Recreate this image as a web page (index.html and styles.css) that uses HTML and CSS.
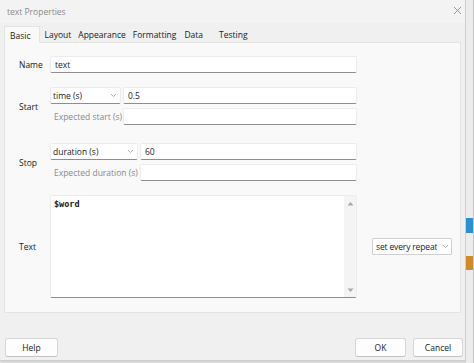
FILE: index.html
```html
<!DOCTYPE html>
<html>
<head>
<meta charset="utf-8">
<link rel="stylesheet" href="styles.css">
</head>
<body>
<div class="screen">
  <div class="dialog">
    <div class="titlebar">
      <span class="title">text Properties</span>
      <svg class="close" width="9" height="9" viewBox="0 0 9 9"><path d="M1 1L8 8M8 1L1 8" stroke="#8a8a8a" stroke-width="0.9" fill="none"/></svg>
    </div>
    <div class="tabs">
      <span class="tab active">Basic</span>
      <span class="tab t-layout">Layout</span>
      <span class="tab t-app">Appearance</span>
      <span class="tab t-fmt">Formatting</span>
      <span class="tab t-data">Data</span>
      <span class="tab t-test">Testing</span>
    </div>
    <div class="panel">
      <div class="row row-name">
        <span class="label">Name</span>
        <div class="field wide">text</div>
      </div>
      <div class="row row-start">
        <span class="label">Start</span>
        <div class="group">
          <div class="line">
            <div class="select sel-time">time (s)<svg class="chev" width="7" height="5" viewBox="0 0 7 5"><path d="M1 1L3.5 3.5L6 1" stroke="#999" stroke-width="0.8" fill="none"/></svg></div>
            <div class="field f-start">0.5</div>
          </div>
          <div class="line">
            <span class="sublabel sl-start">Expected start (s)</span>
            <div class="field f-start"></div>
          </div>
        </div>
      </div>
      <div class="row row-stop">
        <span class="label">Stop</span>
        <div class="group">
          <div class="line">
            <div class="select sel-dur">duration (s)<svg class="chev" width="7" height="5" viewBox="0 0 7 5"><path d="M1 1L3.5 3.5L6 1" stroke="#999" stroke-width="0.8" fill="none"/></svg></div>
            <div class="field f-stop">60</div>
          </div>
          <div class="line">
            <span class="sublabel sl-stop">Expected duration (s)</span>
            <div class="field f-stop"></div>
          </div>
        </div>
      </div>
      <div class="row row-text">
        <span class="label">Text</span>
        <div class="textarea">
          <div class="code">$word</div>
          <div class="scroll">
            <svg width="7" height="5" viewBox="0 0 7 5"><path d="M0.5 4.5L3.5 1L6.5 4.5Z" fill="#a8a8a8"/></svg>
            <svg width="7" height="5" viewBox="0 0 7 5"><path d="M0.5 0.5L3.5 4L6.5 0.5Z" fill="#a8a8a8"/></svg>
          </div>
        </div>
        <div class="select sel-repeat"><span>set every repeat</span><svg class="chev" width="7" height="5" viewBox="0 0 7 5"><path d="M1 1L3.5 3.5L6 1" stroke="#999" stroke-width="0.8" fill="none"/></svg></div>
      </div>
    </div>
    <div class="footer">
      <button class="btn btn-help">Help</button>
      <div class="right-btns">
        <button class="btn btn-ok">OK</button>
        <button class="btn btn-cancel">Cancel</button>
      </div>
    </div>
  </div>
  <div class="bgapp">
    <div class="bg-top"></div>
    <div class="bg-blue"></div>
    <div class="bg-gap"></div>
    <div class="bg-orange"></div>
  </div>
</div>
</body>
</html>
```
FILE: styles.css
```css
* { box-sizing: border-box; }
html, body { margin: 0; padding: 0; }
body {
  width: 474px; height: 363px; overflow: hidden;
  background: #e6e6e6;
  font-family: "Open Sans", "Noto Sans", sans-serif;
  font-size: 8.5px;
  color: #1a1a1a;
  white-space: nowrap;
}
.screen { display: flex; width: 474px; height: 363px; }
.dialog {
  width: 466px; height: 361px;
  background: #f0f0f0;
  border-right: 1px solid #cfcfcf;
  border-bottom: 1px solid #cfcfcf;
  display: flex; flex-direction: column;
  box-shadow: 1px 1px 2px rgba(0,0,0,0.12);
}
.titlebar {
  height: 23px; flex: none;
  display: flex; align-items: center; justify-content: space-between;
  padding: 0 3px 1px 7px;
  background: #f3f3f3;
  color: #8a8a8a;
}
.close { margin-top: -2px; }
.tabs { height: 19px; flex: none; display: flex; align-items: flex-end; padding-left: 4px; }
.tab {
  height: 16px; line-height: 16px;
  padding: 1px 5px 0;
  color: #1a1a1a;
}
.tab.active {
  background: #f9f9f9;
  border: 1px solid #e4e4e4; border-bottom: none;
  padding: 1px 9px 0 5px;
  height: 17px; line-height: 16px;
  position: relative; z-index: 1; margin-bottom: -1px;
}
.t-layout { padding-left: 4px; padding-right: 4px; }
.t-app { padding-left: 3px; padding-right: 4px; }
.t-fmt { padding-left: 3px; padding-right: 5px; }
.t-data { padding-left: 3px; padding-right: 13px; }
.t-test { padding-left: 3px; }
.panel {
  margin: 0 4px;
  height: 271px; flex: none;
  background: #f9f9f9;
  border: 1px solid #e4e4e4;
  padding: 13px 0 0 14px;
  display: flex; flex-direction: column;
}
.row { display: flex; align-items: center; }
.label { width: 31px; flex: none; }
.field {
  height: 17px; line-height: 16px;
  background: #fff;
  border: 1px solid #ececec; border-bottom-color: #8e8e8e;
  border-radius: 2px;
  padding-left: 4px;
}
.wide { width: 307px; }
.row-start { margin-top: 14px; }
.row-stop { margin-top: 18px; }
.row-text { margin-top: 14px; }
.group { display: flex; flex-direction: column; gap: 4px; }
.line { display: flex; align-items: center; gap: 2px; }
.select {
  height: 17px; line-height: 16px;
  background: #fff;
  border: 1px solid #ececec; border-bottom-color: #8e8e8e;
  border-radius: 2px;
  padding-left: 2px;
  display: flex; justify-content: space-between; align-items: center;
  padding-right: 3px;
}
.chev { flex: none; }
.sel-time { width: 71px; }
.f-start { width: 234px; }
.sel-dur { width: 88px; }
.f-stop { width: 217px; }
.sublabel { color: #8a8a8a; padding-left: 4px; }
.sl-start { width: 71px; }
.sl-stop { width: 88px; }
.textarea {
  width: 307px; height: 103px;
  background: #fff;
  border: 1px solid #ececec; border-bottom-color: #8e8e8e;
  border-radius: 2px;
  display: flex;
}
.code {
  flex: 1;
  font-family: "DejaVu Sans Mono", "Liberation Mono", monospace;
  font-weight: bold; font-size: 8.5px;
  padding: 3px 0 0 3px;
}
.scroll {
  width: 12px; background: #f4f4f4;
  display: flex; flex-direction: column; justify-content: space-between; align-items: center;
  padding: 5px 0 4px;
}
.sel-repeat {
  width: 80px; margin-left: 15px;
  border: 1px solid #d0d0d0; border-radius: 1px;
  padding-left: 3px; padding-right: 2px;
  letter-spacing: -0.15px;
}
.sel-repeat span { overflow: hidden; }
.footer {
  flex: 1;
  display: flex; justify-content: space-between; align-items: flex-end;
  padding: 0 2px 3px 5px;
}
.btn {
  height: 19px;
  background: #fdfdfd;
  border: 1px solid #d6d6d6; border-bottom-color: #c4c4c4;
  border-radius: 3px;
  font-family: inherit; font-size: 8.5px; color: #1a1a1a;
  padding: 0;
}
.btn-help { width: 53px; }
.right-btns { display: flex; gap: 7px; }
.btn-ok { width: 51px; }
.btn-cancel { width: 50px; }
.bgapp {
  flex: 1; display: flex; flex-direction: column;
  background: #ececec;
  border-right: 1px solid #c8c8c8;
}
.bg-top { height: 218px; }
.bg-blue { height: 15px; background: #2b8fd0; }
.bg-gap { height: 23px; }
.bg-orange { height: 14px; background: #d08a2a; }
```
